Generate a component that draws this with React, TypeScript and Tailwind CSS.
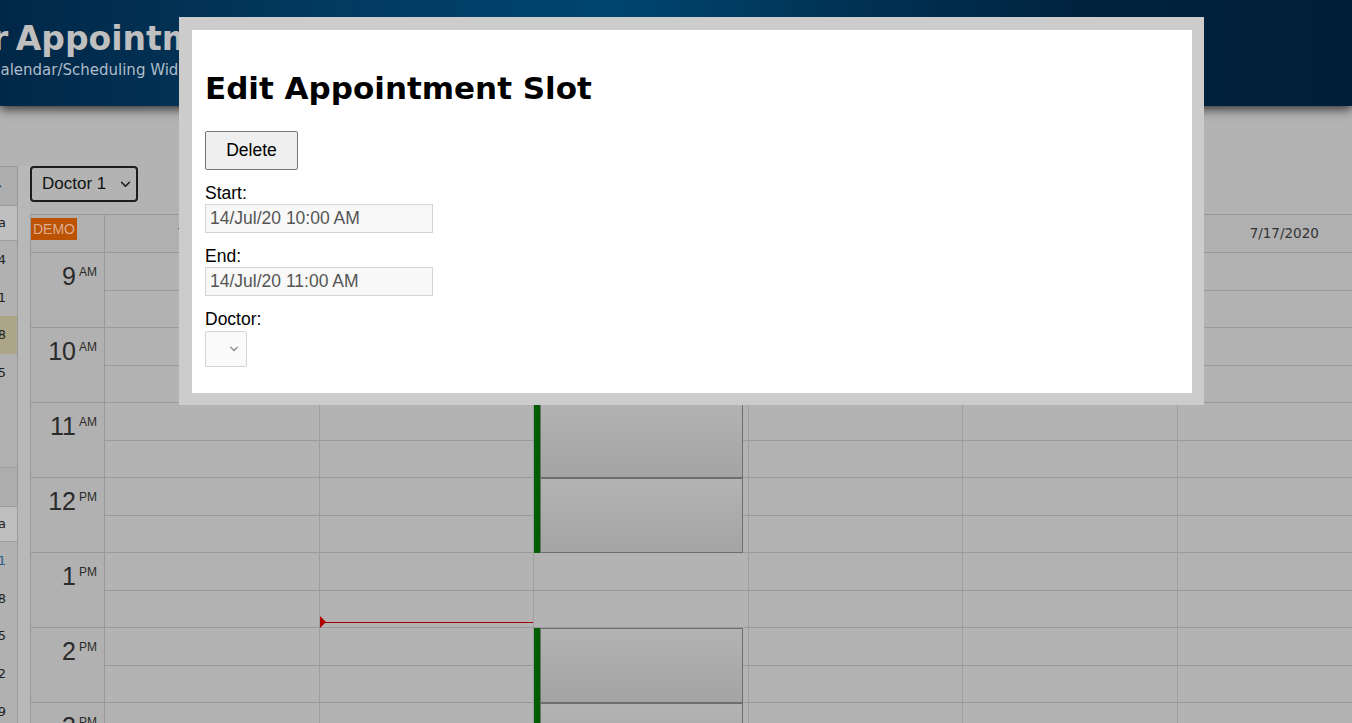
import React from "react";

const HOURS = [
  { h: "9", ap: "AM" },
  { h: "10", ap: "AM" },
  { h: "11", ap: "AM" },
  { h: "12", ap: "PM" },
  { h: "1", ap: "PM" },
  { h: "2", ap: "PM" },
  { h: "3", ap: "PM" },
  { h: "4", ap: "PM" },
];
const DAYS = ["7/12/2020", "7/13/2020", "7/14/2020", "7/15/2020", "7/16/2020", "7/17/2020", "7/18/2020"];
const EVENTS: Record<number, number[]> = { 2: [0, 1, 2, 3, 5, 6] };

const SANS = "font-['Liberation_Sans',Arial,sans-serif]";
const VERD = "font-['DejaVu_Sans',Verdana,sans-serif]";

function Chevron({ className }: { className?: string }) {
  return (
    <svg viewBox="0 0 12 8" className={className} fill="none" stroke="currentColor" strokeWidth="1.8" strokeLinecap="round" strokeLinejoin="round">
      <path d="M1.5 1.5 L6 6 L10.5 1.5" />
    </svg>
  );
}

function NavMonth({ arrow, sats, highlight, blue }: { arrow: boolean; sats: string[]; highlight: number; blue: number }) {
  return (
    <div className={`flex flex-col ${VERD} text-[13px] text-[#222]`}>
      <div className="h-[39px] flex items-center justify-end pr-[15px] bg-[#adadad] border-b border-[#9c9c9c]">
        {arrow ? "»" : ""}
      </div>
      <div className="h-[35px] flex items-center justify-end pr-[11px] bg-[#bfbfbf] border-b border-[#9c9c9c]">Sa</div>
      {sats.map((s, i) => (
        <div
          key={i}
          className={`h-[37.67px] flex items-center justify-end pr-[11px] ${i === highlight ? "bg-[#aca588]" : "bg-[#b1b1b1]"} ${i === blue ? "text-[#2b5f8c]" : ""}`}
        >
          {s}
        </div>
      ))}
    </div>
  );
}

function Field({ label, value }: { label: string; value: string }) {
  return (
    <div className="flex flex-col">
      <label className="text-[17.5px] leading-[19px] text-black">{label}</label>
      <input
        readOnly
        value={value}
        className="mt-[1px] w-[228px] h-[29px] px-[4px] bg-[#f8f8f8] border border-[#d4d4d4] text-[17.5px] text-[#555] outline-none"
      />
    </div>
  );
}

export default function App() {
  return (
    <div className="relative w-[1352px] h-[723px] overflow-hidden bg-[#b3b3b3]">
      {/* header */}
      <header className="relative z-10 h-[106px] pt-[20px] bg-[linear-gradient(90deg,#012747_0%,#023a60_25%,#004670_45%,#003355_62%,#00233f_80%,#001e37_100%)] shadow-[0_3px_10px_rgba(0,0,0,0.75)]">
        <div className={`${VERD} font-bold text-[33px] leading-[38px] text-[#bfbfbf] whitespace-nowrap ml-[-116px] [word-spacing:-4px]`}>
          Doctor Appointment Scheduling
        </div>
        <div className={`${VERD} text-[15px] leading-[19px] text-[#aebdca] whitespace-nowrap ml-[-10px] mt-[3px]`}>
          Calendar/Scheduling Widget for JavaScript
        </div>
      </header>

      {/* main */}
      <div className="flex pt-[60px]">
        <nav className="w-[150px] ml-[-132px] shrink-0 flex flex-col border-r border-[#999] border-t">
          <NavMonth arrow sats={["4", "11", "18", "25", "", ""]} highlight={2} blue={-1} />
          <div className="border-t border-[#9c9c9c]">
            <NavMonth arrow={false} sats={["1", "8", "15", "22", "29", ""]} highlight={-1} blue={0} />
          </div>
        </nav>
        <div className="w-[12px] shrink-0 bg-[#b8b8b8]" />

        <div className="flex flex-col">
          <div className="relative w-[108px] h-[36px]">
            <select
              defaultValue="1"
              className={`${SANS} appearance-none w-full h-full bg-transparent border-2 border-[#1c1c1c] rounded-[4px] pl-[10px] text-[17px] text-[#111] outline-none`}
            >
              <option value="1">Doctor 1</option>
            </select>
            <Chevron className="pointer-events-none absolute right-[7px] top-[15px] w-[11px] h-[7px] text-[#1c1c1c]" />
          </div>

          {/* calendar */}
          <div className="mt-[12px] flex flex-col border-l border-t border-[#999]">
            <div className="flex">
              <div className="w-[74px] h-[38px] shrink-0 border-r border-b border-[#999] bg-[#b0b0b0] pt-[1px]">
                <span className={`${SANS} inline-block bg-[#be5203] text-[#dcae90] text-[14px] leading-[22px] px-[2px]`}>DEMO</span>
              </div>
              {DAYS.map((d) => (
                <div
                  key={d}
                  className={`${VERD} w-[214.5px] h-[38px] shrink-0 border-r border-b border-[#999] bg-[#b0b0b0] flex items-center justify-center text-[13.5px] text-[#333]`}
                >
                  {d}
                </div>
              ))}
            </div>
            <div className="flex">
              <div className="w-[74px] shrink-0 flex flex-col">
                {HOURS.map((hr) => (
                  <div key={hr.h} className={`${SANS} h-[75px] border-r border-b border-[#999] bg-[#b1b1b1] flex justify-end items-start pt-[9px] pr-[7px] text-[#2b2b2b]`}>
                    <span className="text-[25px] leading-[28px]">{hr.h}</span>
                    <span className="text-[12px] leading-[14px] ml-[3px] mt-[3px]">{hr.ap}</span>
                  </div>
                ))}
              </div>
              {DAYS.map((d, di) => (
                <div key={d} className="relative w-[214.5px] shrink-0 border-r border-[#9e9e9e]">
                  {HOURS.flatMap(() => [0, 1]).map((_, i) => (
                    <div key={i} className="h-[37.5px] border-b border-[#9a9a9a]" />
                  ))}
                  {(EVENTS[di] || []).map((hi) => (
                    <div key={hi} className="absolute left-0 right-[5px] flex h-[75px]" style={{ top: hi * 75 }}>
                      <div className="w-[6px] bg-[#005e00]" />
                      <div className="flex-1 border border-[#6e6e6e] bg-[linear-gradient(180deg,#b3b3b3,#a4a4a4)]" />
                    </div>
                  ))}
                  {di === 1 && (
                    <div className="absolute left-0 right-0 top-[369px] h-[1px] bg-[#a30000]">
                      <div className="absolute left-0 top-[-6px] w-0 h-0 border-y-[6px] border-y-transparent border-l-[6px] border-l-[#b00000]" />
                    </div>
                  )}
                </div>
              ))}
            </div>
          </div>
        </div>
      </div>

      {/* modal */}
      <div className="absolute z-20 left-[179px] top-[17px] w-[1025px] h-[388px] bg-[#cccccc] p-[13px] pb-[12px] pr-[12px]">
        <div className={`w-full h-full bg-white pl-[13px] pt-[40px] ${SANS}`}>
          <h1 className={`${VERD} font-bold text-[31px] leading-[36px] text-black`}>Edit Appointment Slot</h1>
          <button className="mt-[25px] w-[93px] h-[39px] bg-[#efefef] border border-[#767676] rounded-[2px] text-[17.5px] text-black">
            Delete
          </button>
          <div className="mt-[14px] flex flex-col gap-[14px]">
            <Field label="Start:" value="14/Jul/20 10:00 AM" />
            <Field label="End:" value="14/Jul/20 11:00 AM" />
            <div className="flex flex-col">
              <label className="text-[17.5px] leading-[19px] text-black">Doctor:</label>
              <div className="relative mt-[2px] w-[42px] h-[36px]">
                <select className="appearance-none w-full h-full bg-[#fafafa] border border-[#d4d4d4] rounded-[2px] outline-none" />
                <Chevron className="pointer-events-none absolute left-[24px] top-[15px] w-[10px] h-[6px] text-[#8a8a8a]" />
              </div>
            </div>
          </div>
        </div>
      </div>
    </div>
  );
}
